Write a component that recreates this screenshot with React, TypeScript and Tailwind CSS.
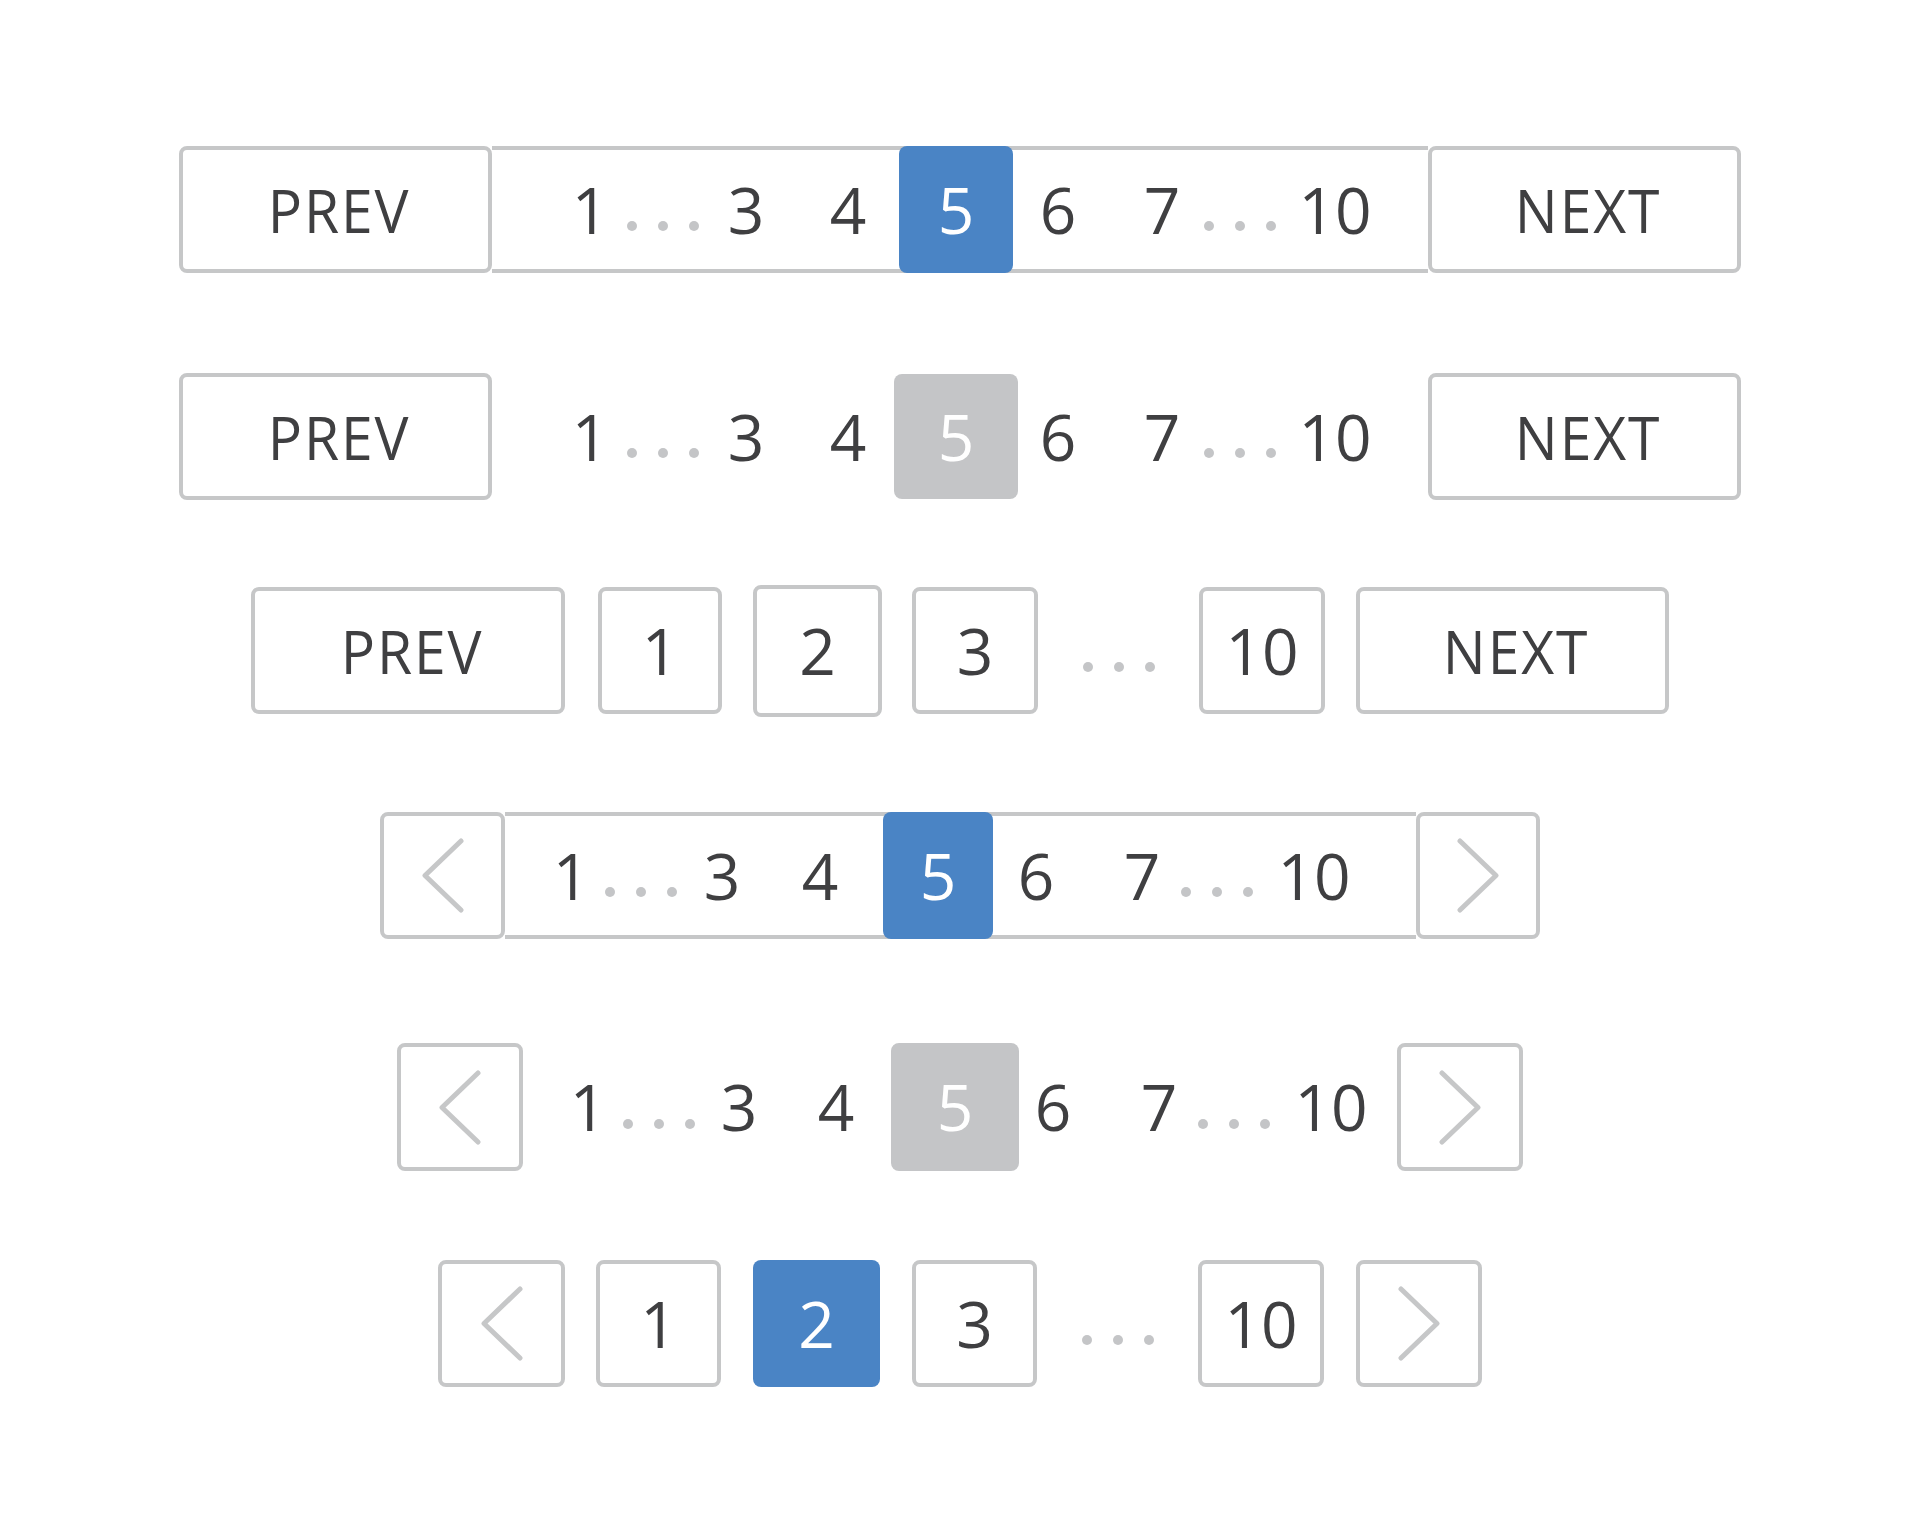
import React from 'react';

// shared look
const BORDER = 'border-4 border-[#c6c7c8] rounded-[8px] bg-white';
const TXT = "font-['Open_Sans',sans-serif] text-[64px] leading-none text-[#3f3f41]";

const Dots = ({ className = '' }: { className?: string }) => (
  <div className={`flex items-center justify-center gap-[21px] pt-[33px] h-full ${className}`}>
    <span className="block w-[10px] h-[10px] rounded-full bg-[#c4c5c7]" />
    <span className="block w-[10px] h-[10px] rounded-full bg-[#c4c5c7]" />
    <span className="block w-[10px] h-[10px] rounded-full bg-[#c4c5c7]" />
  </div>
);

const Num = ({ children, className = '' }: { children: React.ReactNode; className?: string }) => (
  <div className={`flex items-center justify-center h-full ${className}`}>
    <span className={TXT}>{children}</span>
  </div>
);

const Chevron = ({ dir }: { dir: 'left' | 'right' }) => (
  <svg width="46" height="75" viewBox="0 0 46 75" fill="none">
    <path
      d={dir === 'left' ? 'M41 3 L5 37.5 L41 72' : 'M5 3 L41 37.5 L5 72'}
      stroke="#c6c7c8"
      strokeWidth="5"
      strokeLinecap="round"
      strokeLinejoin="round"
    />
  </svg>
);

const TextBtn = ({ label, className = '' }: { label: string; className?: string }) => (
  <div className={`${BORDER} flex items-center justify-center h-full pl-[8px] ${className}`}>
    <span className="inline-block font-['Open_Sans',sans-serif] text-[60px] leading-none text-[#3f3f41] tracking-[2px] scale-x-[0.95]">
      {label}
    </span>
  </div>
);

const ArrowBtn = ({ dir, className = '' }: { dir: 'left' | 'right'; className?: string }) => (
  <div className={`${BORDER} flex items-center justify-center h-full ${className}`}>
    <Chevron dir={dir} />
  </div>
);

const Box = ({ children, className = '' }: { children: React.ReactNode; className?: string }) => (
  <div className={`${BORDER} flex items-center justify-center h-full ${className}`}>
    <span className={TXT}>{children}</span>
  </div>
);

export default function App() {
  return (
    <div className="w-full min-h-[1536px] bg-white pt-[146px] flex flex-col items-center">
      {/* 1. joined bar, PREV / NEXT, blue current */}
      <div className="flex h-[127px] w-[1562px]">
        <TextBtn label="PREV" className="w-[313px]" />
        <div className="flex w-[936px] h-full border-y-4 border-[#c6c7c8]">
          <div className="w-[78px]" />
          <Num className="w-[40px]">1</Num>
          <Dots className="w-[106px]" />
          <Num className="w-[60px]">3</Num>
          <div className="w-[42px]" />
          <Num className="w-[60px]">4</Num>
          <div className="w-[21px]" />
          <div className="w-[114px] h-[127px] -my-[4px] bg-[#4a84c5] rounded-[8px] flex items-center justify-center">
            <span className={`${TXT} !text-white`}>5</span>
          </div>
          <div className="w-[15px]" />
          <Num className="w-[60px]">6</Num>
          <div className="w-[44px]" />
          <Num className="w-[60px]">7</Num>
          <Dots className="w-[96px]" />
          <Num className="w-[94px]">10</Num>
          <div className="w-[46px]" />
        </div>
        <TextBtn label="NEXT" className="w-[313px]" />
      </div>

      {/* 2. loose, gray current */}
      <div className="flex h-[127px] w-[1562px] mt-[100px]">
        <TextBtn label="PREV" className="w-[313px]" />
        <div className="flex items-center w-[936px] h-full">
          <div className="w-[78px]" />
          <Num className="w-[40px]">1</Num>
          <Dots className="w-[106px]" />
          <Num className="w-[60px]">3</Num>
          <div className="w-[42px]" />
          <Num className="w-[60px]">4</Num>
          <div className="w-[16px]" />
          <div className="w-[124px] h-[125px] bg-[#c4c5c7] rounded-[8px] flex items-center justify-center">
            <span className={`${TXT} !text-white`}>5</span>
          </div>
          <div className="w-[10px]" />
          <Num className="w-[60px]">6</Num>
          <div className="w-[44px]" />
          <Num className="w-[60px]">7</Num>
          <Dots className="w-[96px]" />
          <Num className="w-[94px]">10</Num>
          <div className="w-[46px]" />
        </div>
        <TextBtn label="NEXT" className="w-[313px]" />
      </div>

      {/* 3. separate boxes */}
      <div className="flex items-center h-[127px] w-[1418px] mt-[87px]">
        <TextBtn label="PREV" className="w-[314px]" />
        <Box className="w-[124px] ml-[33px]">1</Box>
        <Box className="w-[129px] !h-[132px] ml-[31px]">2</Box>
        <Box className="w-[126px] ml-[30px]">3</Box>
        <Dots className="w-[161px]" />
        <Box className="w-[126px]">10</Box>
        <TextBtn label="NEXT" className="w-[313px] ml-[31px]" />
      </div>

      {/* 4. joined bar with arrows */}
      <div className="flex h-[127px] w-[1160px] mt-[98px]">
        <ArrowBtn dir="left" className="w-[125px]" />
        <div className="flex w-[911px] h-full border-y-4 border-[#c6c7c8]">
          <div className="w-[46px]" />
          <Num className="w-[40px]">1</Num>
          <Dots className="w-[100px]" />
          <Num className="w-[62px]">3</Num>
          <div className="w-[37px]" />
          <Num className="w-[60px]">4</Num>
          <div className="w-[33px]" />
          <div className="w-[110px] h-[127px] -my-[4px] bg-[#4a84c5] rounded-[8px] flex items-center justify-center">
            <span className={`${TXT} !text-white`}>5</span>
          </div>
          <div className="w-[13px]" />
          <Num className="w-[60px]">6</Num>
          <div className="w-[46px]" />
          <Num className="w-[60px]">7</Num>
          <Dots className="w-[90px]" />
          <Num className="w-[104px]">10</Num>
          <div className="w-[50px]" />
        </div>
        <ArrowBtn dir="right" className="w-[124px]" />
      </div>

      {/* 5. loose with arrows, gray current */}
      <div className="flex h-[128px] w-[1126px] mt-[104px]">
        <ArrowBtn dir="left" className="w-[126px]" />
        <div className="flex items-center w-[874px] h-full">
          <div className="w-[45px]" />
          <Num className="w-[40px]">1</Num>
          <Dots className="w-[102px]" />
          <Num className="w-[58px]">3</Num>
          <div className="w-[38px]" />
          <Num className="w-[60px]">4</Num>
          <div className="w-[25px]" />
          <div className="w-[128px] h-full bg-[#c4c5c7] rounded-[8px] flex items-center justify-center">
            <span className={`${TXT} !text-white`}>5</span>
          </div>
          <div className="w-[4px]" />
          <Num className="w-[60px]">6</Num>
          <div className="w-[46px]" />
          <Num className="w-[60px]">7</Num>
          <Dots className="w-[90px]" />
          <Num className="w-[104px]">10</Num>
          <div className="w-[14px]" />
        </div>
        <ArrowBtn dir="right" className="w-[126px]" />
      </div>

      {/* 6. boxes with arrows, blue current */}
      <div className="flex items-center h-[127px] w-[1044px] mt-[89px]">
        <ArrowBtn dir="left" className="w-[127px]" />
        <Box className="w-[125px] ml-[31px]">1</Box>
        <div className="w-[127px] h-full ml-[32px] bg-[#4a84c5] rounded-[8px] flex items-center justify-center">
          <span className={`${TXT} !text-white`}>2</span>
        </div>
        <Box className="w-[125px] ml-[32px]">3</Box>
        <Dots className="w-[161px]" />
        <Box className="w-[126px]">10</Box>
        <ArrowBtn dir="right" className="w-[126px] ml-[32px]" />
      </div>
    </div>
  );
}
